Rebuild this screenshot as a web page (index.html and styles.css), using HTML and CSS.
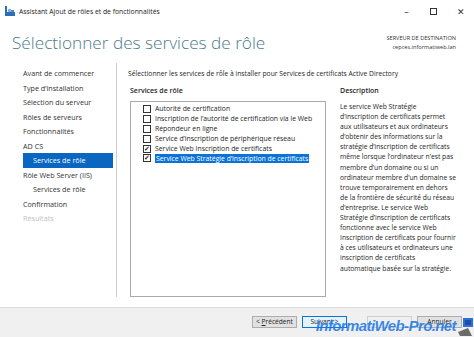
FILE: index.html
```html
<!DOCTYPE html>
<html lang="fr">
<head>
  <meta charset="UTF-8">
  <title>Assistant Ajout de rôles et de fonctionnalités</title>
  <link rel="stylesheet" href="styles.css">
</head>
<body>
  <div class="window">
    <div class="titlebar">
      <svg class="app-icon" width="10" height="10" viewBox="0 0 10 10">
        <rect x="0" y="0" width="2" height="10" fill="#2a6fb8"/>
        <rect x="2" y="6" width="8" height="4" fill="#2a6fb8"/>
        <rect x="3" y="3" width="3" height="3" fill="#7fb3e0"/>
        <rect x="6" y="4" width="3" height="2" fill="#4d8fd0"/>
      </svg>
      <span class="title">Assistant Ajout de rôles et de fonctionnalités</span>
      <div class="controls">
        <span class="ctl">&#8211;</span>
        <span class="ctl"><span class="max"></span></span>
        <span class="ctl">&#10005;</span>
      </div>
    </div>

    <div class="header">
      <h1>Sélectionner des services de rôle</h1>
      <div class="dest">
        <div>SERVEUR DE DESTINATION</div>
        <div>cepces.informatiweb.lan</div>
      </div>
    </div>

    <div class="main">
      <ul class="nav">
        <li>Avant de commencer</li>
        <li>Type d’installation</li>
        <li>Sélection du serveur</li>
        <li>Rôles de serveurs</li>
        <li>Fonctionnalités</li>
        <li>AD CS</li>
        <li class="sub active">Services de rôle</li>
        <li>Rôle Web Server (IIS)</li>
        <li class="sub">Services de rôle</li>
        <li>Confirmation</li>
        <li class="disabled">Résultats</li>
      </ul>

      <div class="content">
        <p class="intro">Sélectionner les services de rôle à installer pour Services de certificats Active Directory</p>
        <div class="columns">
          <div class="services">
            <h2>Services de rôle</h2>
            <div class="listbox">
              <div class="item"><span class="box"></span><span>Autorité de certification</span></div>
              <div class="item"><span class="box"></span><span>Inscription de l’autorité de certification via le Web</span></div>
              <div class="item"><span class="box"></span><span>Répondeur en ligne</span></div>
              <div class="item"><span class="box"></span><span>Service d’inscription de périphérique réseau</span></div>
              <div class="item"><span class="box checked">&#10003;</span><span>Service Web Inscription de certificats</span></div>
              <div class="item"><span class="box checked">&#10003;</span><span class="selected">Service Web Stratégie d’inscription de certificats</span></div>
            </div>
          </div>
          <div class="description">
            <h2>Description</h2>
            <p>Le service Web Stratégie<br>d’inscription de certificats permet<br>aux utilisateurs et aux ordinateurs<br>d’obtenir des informations sur la<br>stratégie d’inscription de certificats<br>même lorsque l’ordinateur n’est pas<br>membre d’un domaine ou si un<br>ordinateur membre d’un domaine se<br>trouve temporairement en dehors<br>de la frontière de sécurité du réseau<br>d’entreprise. Le service Web<br>Stratégie d’inscription de certificats<br>fonctionne avec le service Web<br>Inscription de certificats pour fournir<br>à ces utilisateurs et ordinateurs une<br>inscription de certificats<br>automatique basée sur la stratégie.</p>
          </div>
        </div>
      </div>
    </div>

    <div class="footer">
      <button class="btn">&lt; <u>P</u>récédent</button>
      <button class="btn primary">Suivant &gt;</button>
      <button class="btn">Installer</button>
      <button class="btn">Annuler</button>
      <div class="watermark">
        <span>InformatiWeb-Pro.net</span>
        <svg width="16" height="18" viewBox="0 0 16 18">
          <rect x="5" y="0" width="10" height="9" fill="#2f6fd6"/>
          <rect x="7" y="2" width="6" height="5" fill="#1b4fa8"/>
          <path d="M0 14 L10 10 L14 18 L2 18 Z" fill="#6b6b6b"/>
        </svg>
      </div>
    </div>
  </div>
</body>
</html>
```

FILE: styles.css
```css
* {
  box-sizing: border-box;
}

body {
  margin: 0;
  font-family: "Open Sans", "Noto Sans", sans-serif;
  color: #1e1e1e;
  background: #fff;
}

.window {
  width: 474px;
  height: 337px;
  display: flex;
  flex-direction: column;
  background: #fff;
  position: relative;
  overflow: hidden;
}

.titlebar {
  height: 22px;
  display: flex;
  align-items: center;
  padding-left: 5px;
}

.app-icon {
  margin-right: 4px;
}

.title {
  font-size: 6.8px;
  color: #222;
}

.controls {
  margin-left: auto;
  display: flex;
}

.ctl {
  width: 27px;
  text-align: center;
  font-size: 9px;
  color: #333;
  display: flex;
  justify-content: center;
  align-items: center;
}

.max {
  width: 7px;
  height: 7px;
  border: 1px solid #333;
}

.header {
  height: 41px;
  display: flex;
  align-items: flex-start;
  justify-content: space-between;
  padding: 10px 18px 0 12px;
}

h1 {
  margin: 0;
  font-size: 17.2px;
  font-weight: 300;
  color: #4c7b90;
  line-height: 22px;
}

.dest {
  text-align: right;
  font-size: 5.6px;
  line-height: 9px;
  color: #333;
  padding-top: 2px;
}

.main {
  flex: 1;
  display: flex;
  min-height: 0;
}

.nav {
  list-style: none;
  margin: 0 0 10px 0;
  padding: 3px 3px 0 23px;
  width: 117px;
  border-right: 1px solid #cfcfcf;
}

.nav li {
  height: 14.5px;
  line-height: 14.5px;
  font-size: 7.2px;
  color: #333;
  white-space: nowrap;
}

.nav li.sub {
  padding-left: 10px;
}

.nav li.active {
  background: #0a66c0;
  color: #fff;
}

.nav li.disabled {
  color: #c2c2c2;
}

.content {
  flex: 1;
  padding: 6px 0 10px 11px;
  display: flex;
  flex-direction: column;
}

.intro {
  margin: 0;
  font-size: 6.75px;
  line-height: 10px;
  white-space: nowrap;
}

.columns {
  flex: 1;
  display: flex;
  margin-top: 6px;
  padding-left: 2px;
}

h2 {
  margin: 0;
  font-size: 7px;
  font-weight: 600;
  line-height: 11px;
}

.services {
  width: 196px;
  display: flex;
  flex-direction: column;
}

.listbox {
  flex: 1;
  margin-top: 5px;
  border: 1px solid #aaa;
  padding: 2px 0 0 12px;
}

.item {
  display: flex;
  align-items: center;
  height: 9.9px;
  font-size: 6.85px;
  white-space: nowrap;
}

.box {
  width: 8px;
  height: 8px;
  border: 1px solid #333;
  margin-right: 4px;
  font-size: 7px;
  line-height: 6px;
  text-align: center;
  font-weight: bold;
  flex-shrink: 0;
}

.selected {
  background: #0a74d6;
  color: #fff;
  padding: 0 1px;
}

.description {
  margin-left: 14px;
}

.description p {
  margin: 6px 0 0 0;
  font-size: 6.75px;
  line-height: 10.1px;
  white-space: nowrap;
}

.footer {
  height: 30px;
  background: #f0f0f0;
  border-top: 1px solid #dcdcdc;
  display: flex;
  align-items: center;
  justify-content: flex-end;
  padding: 0 12px 2px 0;
  gap: 5px;
}

.btn {
  font-family: inherit;
  font-size: 6.6px;
  height: 12px;
  width: 45px;
  padding: 0;
  background: #e1e1e1;
  border: 1px solid #adadad;
  color: #222;
}

.btn.primary {
  border-color: #0a74d6;
  background: #e5f1fb;
}

.btn:nth-child(3) {
  margin-left: 15px;
  background: #f0f0f0;
  border-color: #cfcfcf;
  color: transparent;
}

.watermark {
  position: absolute;
  right: 0;
  bottom: 1px;
  display: flex;
  align-items: flex-end;
  gap: 2px;
}

.watermark span {
  font-family: "Liberation Sans", sans-serif;
  font-style: italic;
  font-weight: bold;
  font-size: 15px;
  color: rgba(30, 120, 230, 0.88);
  letter-spacing: -0.6px;
  margin-bottom: 2px;
}
```
